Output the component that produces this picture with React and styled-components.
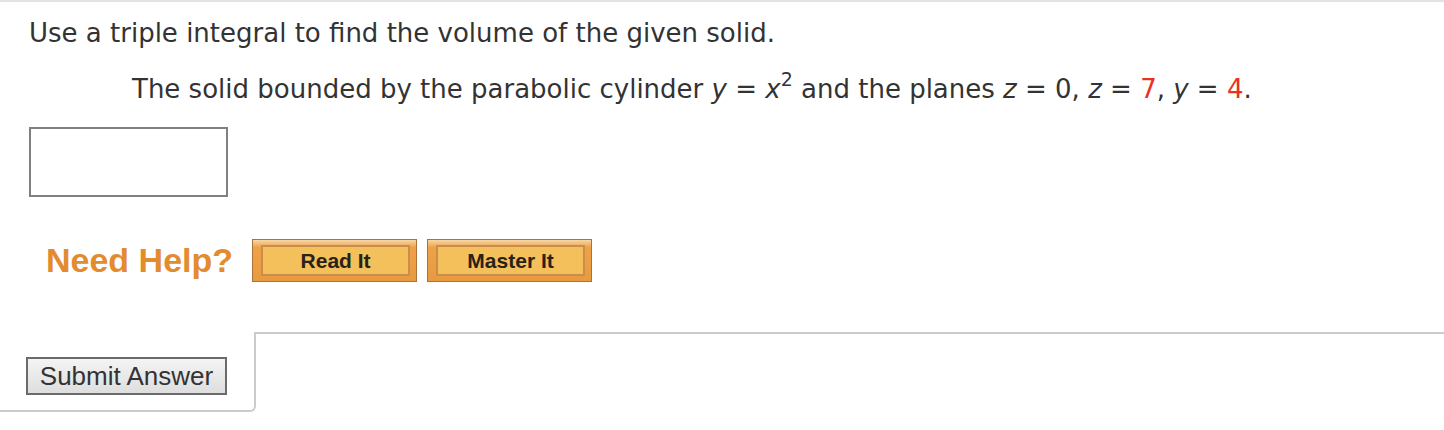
import React from "react";
import styled, { createGlobalStyle } from "styled-components";

const Global = createGlobalStyle`
  html, body { margin: 0; padding: 0; background: #fff; }
  body { font-family: "DejaVu Sans", Verdana, sans-serif; color: #333; }
`;

const Page = styled.div`
  border-top: 2px solid #e2e2e2;
  width: 1444px;
  height: 428px;
  display: flex;
  flex-direction: column;
`;

const Question = styled.div`
  padding: 16px 0 0 29px;
  display: flex;
  flex-direction: column;
`;

const Prompt = styled.p`
  margin: 0;
  font-size: 26px;
  line-height: 30px;
  color: #333;
  padding-left: ${(p) => p.$indent || 0}px;
  margin-top: ${(p) => p.$top || 0}px;
`;

const V = styled.i`
  font-style: italic;
`;

const Red = styled.span`
  color: #e8321e;
`;

const Sup = styled.sup`
  font-size: 19px;
  line-height: 0;
  vertical-align: 12px;
`;

const AnswerBox = styled.input`
  margin-top: 23px;
  width: 199px;
  height: 70px;
  box-sizing: border-box;
  border: 2px solid #808080;
  outline: none;
  background: #fff;
  padding: 0;
`;

const HelpRow = styled.div`
  display: flex;
  align-items: center;
  height: 43px;
  margin-top: 42px;
  padding-left: 17px;
  gap: 10px;
`;

const HelpLabel = styled.span`
  font-family: "Liberation Sans", Arial, sans-serif;
  font-weight: bold;
  font-size: 34px;
  line-height: 40px;
  color: #e38b2f;
  margin-right: 9px;
  margin-top: -1px;
`;

const OrangeButton = styled.button`
  width: 165px;
  height: 43px;
  box-sizing: border-box;
  border: 1px solid #a8733c;
  background: linear-gradient(#f7d7a8 0%, #eea247 18%, #e99a3f 100%);
  padding: 5px 6px 5px 8px;
  display: flex;
  cursor: pointer;
`;

const OrangeInner = styled.span`
  flex: 1;
  display: flex;
  align-items: center;
  justify-content: center;
  border: 2px solid #c98e4c;
  background: #f3c05c;
  font-family: "Liberation Sans", Arial, sans-serif;
  font-weight: bold;
  font-size: 21px;
  color: #2a2216;
  padding-top: 1px;
`;

const Footer = styled.div`
  margin-top: 50px;
  display: flex;
`;

const SubmitCell = styled.div`
  width: 256px;
  height: 80px;
  box-sizing: border-box;
  border-right: 2px solid #cbcbcb;
  border-bottom: 2px solid #cbcbcb;
  border-bottom-right-radius: 6px;
  padding: 25px 0 0 26px;
`;

const RestCell = styled.div`
  flex: 1;
  border-top: 2px solid #cbcbcb;
`;

const SubmitButton = styled.button`
  width: 201px;
  height: 38px;
  box-sizing: border-box;
  border: 2px solid #6b6b6b;
  background: linear-gradient(#f4f4f4, #dedede);
  font-family: "Liberation Sans", Arial, sans-serif;
  font-size: 26px;
  color: #333;
  padding: 0;
  cursor: pointer;
`;

export default function App() {
  return (
    <>
      <Global />
      <Page>
        <Question>
          <Prompt>Use a triple integral to find the volume of the given solid.</Prompt>
          <Prompt $indent={103} $top={26}>
            The solid bounded by the parabolic cylinder <V>y</V> = <V>x</V>
            <Sup>2</Sup> and the planes <V>z</V> = 0, <V>z</V> = <Red>7</Red>, <V>y</V> ={" "}
            <Red>4</Red>.
          </Prompt>
          <AnswerBox type="text" aria-label="answer" />
          <HelpRow>
            <HelpLabel>Need Help?</HelpLabel>
            <OrangeButton>
              <OrangeInner>Read It</OrangeInner>
            </OrangeButton>
            <OrangeButton>
              <OrangeInner>Master It</OrangeInner>
            </OrangeButton>
          </HelpRow>
        </Question>
        <Footer>
          <SubmitCell>
            <SubmitButton>Submit Answer</SubmitButton>
          </SubmitCell>
          <RestCell />
        </Footer>
      </Page>
    </>
  );
}
